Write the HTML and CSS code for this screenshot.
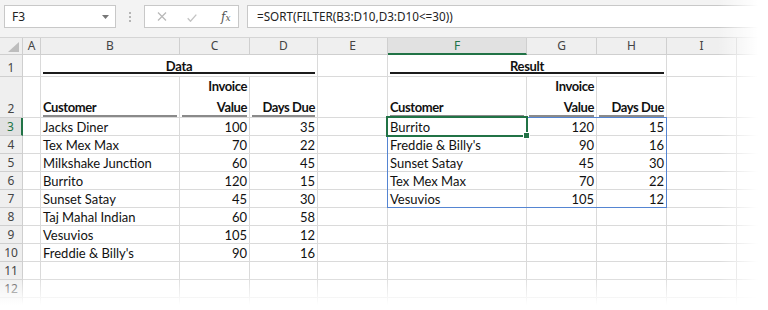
FILE: index.html
```html
<!DOCTYPE html>
<html lang="en">
<head>
    <meta charset="UTF-8">
    <meta name="viewport" content="width=device-width, initial-scale=1.0">
    <title>SORT FILTER</title>
    <link rel="stylesheet" href="styles.css">
</head>
<body>
    <!-- شريط الصيغة -->
    <div class="formula-bar">
        <div class="name-box">
            <span>F3</span>
            <svg width="7" height="4" viewBox="0 0 7 4"><path d="M0 0h7L3.5 4z" fill="#777"/></svg>
        </div>
        <div class="grip">
            <svg width="2" height="10" viewBox="0 0 2 10"><rect y="0" width="2" height="2" fill="#b5b5b5"/><rect y="4" width="2" height="2" fill="#b5b5b5"/><rect y="8" width="2" height="2" fill="#b5b5b5"/></svg>
        </div>
        <div class="fx-box">
            <svg class="ico-x" width="10" height="9" viewBox="0 0 10 9"><path d="M1 0.5l8 8M9 0.5l-8 8" stroke="#b9b9b9" stroke-width="1.3" fill="none"/></svg>
            <svg class="ico-ok" width="10" height="8" viewBox="0 0 10 8"><path d="M0.7 4.2l2.8 3 5.8-6.6" stroke="#c4c4c4" stroke-width="1.4" fill="none"/></svg>
            <span class="fx"><i>f</i><small>x</small></span>
        </div>
        <div class="formula">=SORT(FILTER(B3:D10,D3:D10&lt;=30))</div>
    </div>

    <!-- الجدول -->
    <div class="sheet">
        <div class="corner"><span class="tri"></span></div>
        <div class="ch">A</div><div class="ch">B</div><div class="ch">C</div><div class="ch">D</div><div class="ch">E</div>
        <div class="ch on">F</div><div class="ch">G</div><div class="ch">H</div><div class="ch">I</div><div class="ch"></div>

        <div class="rh">1</div><div class="c"></div>
        <div class="c ttl span3">Data</div>
        <div class="c"></div>
        <div class="c ttl span3">Result</div>
        <div class="c"></div><div class="c"></div>

        <div class="rh">2</div><div class="c"></div>
        <div class="c hd">Customer</div><div class="c hd n">Invoice<br>Value</div><div class="c hd n">Days Due</div>
        <div class="c"></div>
        <div class="c hd">Customer</div><div class="c hd n">Invoice<br>Value</div><div class="c hd n">Days Due</div>
        <div class="c"></div><div class="c"></div>

        <div class="rh on">3</div><div class="c"></div>
        <div class="c">Jacks Diner</div><div class="c n">100</div><div class="c n">35</div><div class="c"></div>
        <div class="c">Burrito</div><div class="c n">120</div><div class="c n">15</div><div class="c"></div><div class="c"></div>

        <div class="rh">4</div><div class="c"></div>
        <div class="c">Tex Mex Max</div><div class="c n">70</div><div class="c n">22</div><div class="c"></div>
        <div class="c">Freddie &amp; Billy's</div><div class="c n">90</div><div class="c n">16</div><div class="c"></div><div class="c"></div>

        <div class="rh">5</div><div class="c"></div>
        <div class="c">Milkshake Junction</div><div class="c n">60</div><div class="c n">45</div><div class="c"></div>
        <div class="c">Sunset Satay</div><div class="c n">45</div><div class="c n">30</div><div class="c"></div><div class="c"></div>

        <div class="rh">6</div><div class="c"></div>
        <div class="c">Burrito</div><div class="c n">120</div><div class="c n">15</div><div class="c"></div>
        <div class="c">Tex Mex Max</div><div class="c n">70</div><div class="c n">22</div><div class="c"></div><div class="c"></div>

        <div class="rh">7</div><div class="c"></div>
        <div class="c">Sunset Satay</div><div class="c n">45</div><div class="c n">30</div><div class="c"></div>
        <div class="c">Vesuvios</div><div class="c n">105</div><div class="c n">12</div><div class="c"></div><div class="c"></div>

        <div class="rh">8</div><div class="c"></div>
        <div class="c">Taj Mahal Indian</div><div class="c n">60</div><div class="c n">58</div><div class="c"></div>
        <div class="c"></div><div class="c"></div><div class="c"></div><div class="c"></div><div class="c"></div>

        <div class="rh">9</div><div class="c"></div>
        <div class="c">Vesuvios</div><div class="c n">105</div><div class="c n">12</div><div class="c"></div>
        <div class="c"></div><div class="c"></div><div class="c"></div><div class="c"></div><div class="c"></div>

        <div class="rh">10</div><div class="c"></div>
        <div class="c">Freddie &amp; Billy's</div><div class="c n">90</div><div class="c n">16</div><div class="c"></div>
        <div class="c"></div><div class="c"></div><div class="c"></div><div class="c"></div><div class="c"></div>

        <div class="rh">11</div><div class="c"></div>
        <div class="c"></div><div class="c"></div><div class="c"></div><div class="c"></div>
        <div class="c"></div><div class="c"></div><div class="c"></div><div class="c"></div><div class="c"></div>

        <div class="rh">12</div><div class="c"></div>
        <div class="c"></div><div class="c"></div><div class="c"></div><div class="c"></div>
        <div class="c"></div><div class="c"></div><div class="c"></div><div class="c"></div><div class="c"></div>

        <div class="rh"></div><div class="c"></div>
        <div class="c"></div><div class="c"></div><div class="c"></div><div class="c"></div>
        <div class="c"></div><div class="c"></div><div class="c"></div><div class="c"></div><div class="c"></div>

        <!-- نطاق النتيجة والخلية النشطة -->
        <div class="spill"></div>
        <div class="active"><span class="handle"></span></div>
    </div>

    <div class="fade-right"></div>
    <div class="fade-bottom"></div>
</body>
</html>
```

FILE: styles.css
```css
/* استايل عام للصفحة */
* {
    box-sizing: border-box;
}

html, body {
    margin: 0;
    overflow: hidden;
    background: #fff;
}

body {
    width: 768px;
    height: 310px;
    position: relative;
    font-family: Lato, "Liberation Sans", sans-serif;
    color: #111;
}

/* شريط الصيغة */
.formula-bar {
    height: 37px;
    background: #f3f3f3;
    display: flex;
    align-items: flex-start;
    padding: 5px 0 0 4px;
    font-family: "Noto Sans", "Liberation Sans", sans-serif;
    font-size: 12px;
    color: #222;
}

.name-box {
    width: 112px;
    height: 23px;
    background: #fff;
    border: 1px solid #c8c8c8;
    display: flex;
    align-items: center;
    justify-content: space-between;
    padding: 0 6px 0 7px;
}

.grip {
    width: 28px;
    height: 23px;
    display: flex;
    align-items: center;
    justify-content: center;
}

.fx-box {
    width: 95px;
    height: 23px;
    background: #fff;
    border: 1px solid #c8c8c8;
    display: flex;
    align-items: center;
    padding-left: 12px;
}

.ico-ok {
    margin-left: 20px;
    margin-top: 3px;
}

.fx {
    margin-left: 24px;
    font-family: "DejaVu Serif", "Liberation Serif", serif;
    font-size: 12px;
    color: #555;
}

.fx small {
    font-size: 9px;
    font-style: italic;
}

.formula {
    flex: 1;
    height: 23px;
    margin-left: 8px;
    background: #fff;
    border: 1px solid #c8c8c8;
    line-height: 21px;
    padding-left: 9px;
    font-size: 11.7px;
}

/* الشبكة */
.sheet {
    position: relative;
    display: grid;
    grid-template-columns: 23px 18px 139px 70px 68px 70px 139px 70px 70px 70px 1fr;
    grid-template-rows: 17px 22px 41px repeat(11, 18px);
    border-top: 1px solid #d5d5d5;
    font-size: 13px;
}

.corner, .ch, .rh {
    background: #efefef;
    border-right: 1px solid #cfcfcf;
    border-bottom: 1px solid #cfcfcf;
    font-family: "Noto Sans", "Liberation Sans", sans-serif;
    font-size: 12px;
    color: #444;
}

.corner {
    position: relative;
}

.tri {
    position: absolute;
    right: 3px;
    bottom: 2px;
    border-left: 11px solid transparent;
    border-bottom: 10px solid #bdbdbd;
}

.ch {
    text-align: center;
    line-height: 16px;
}

.ch.on {
    background: #e1e1e1;
    border-bottom: 2px solid #217346;
    color: #217346;
}

.rh {
    display: flex;
    align-items: flex-end;
    justify-content: center;
    line-height: 17px;
}

.rh.on {
    background: #e1e1e1;
    border-right: 2px solid #217346;
    color: #217346;
}

.c {
    position: relative;
    border-right: 1px solid #dadada;
    border-bottom: 1px solid #dadada;
    padding: 0 2px;
    line-height: 18px;
    white-space: nowrap;
    overflow: hidden;
}

.n {
    text-align: right;
}

/* العنوان */
.ttl {
    grid-column: span 3;
    font-weight: bold;
    letter-spacing: -0.3px;
    text-align: center;
    line-height: 18px;
    display: flex;
    align-items: flex-end;
    justify-content: center;
    padding-bottom: 1px;
}

.ttl::after, .hd::after {
    content: "";
    position: absolute;
    left: 2px;
    right: 2px;
    height: 2px;
    background: #1c1c1c;
}

.ttl::after {
    bottom: 2px;
}

/* رؤوس الأعمدة */
.hd {
    font-weight: bold;
    letter-spacing: -0.4px;
    line-height: 21px;
    display: flex;
    flex-direction: column;
    justify-content: flex-end;
    border-bottom: 0;
    box-shadow: inset 0 -1px #dadada;
}

.hd.n {
    align-items: flex-end;
}

.hd::after {
    bottom: 1px;
    background: #8a8a8a;
}

.spill {
    position: absolute;
    grid-row: 4 / 9;
    grid-column: 7 / 10;
    top: -1px;
    left: -1px;
    right: 0;
    bottom: 0;
    border: 1px solid #5585d2;
}

.active {
    position: absolute;
    grid-row: 4 / 5;
    grid-column: 7 / 8;
    top: -2px;
    left: -2px;
    right: -1px;
    bottom: -1px;
    border: 2px solid #217346;
}

.handle {
    position: absolute;
    right: -4px;
    bottom: -4px;
    width: 7px;
    height: 7px;
    background: #217346;
    border: 1px solid #fff;
}

/* تلاشي الأطراف */
.fade-right {
    position: absolute;
    top: 0;
    right: 0;
    width: 50px;
    height: 310px;
    background: linear-gradient(to right, rgba(255,255,255,0), #fff 80%);
}

.fade-bottom {
    position: absolute;
    left: 0;
    bottom: 0;
    width: 768px;
    height: 34px;
    background: linear-gradient(to bottom, rgba(255,255,255,0), #fff 85%);
}
```
